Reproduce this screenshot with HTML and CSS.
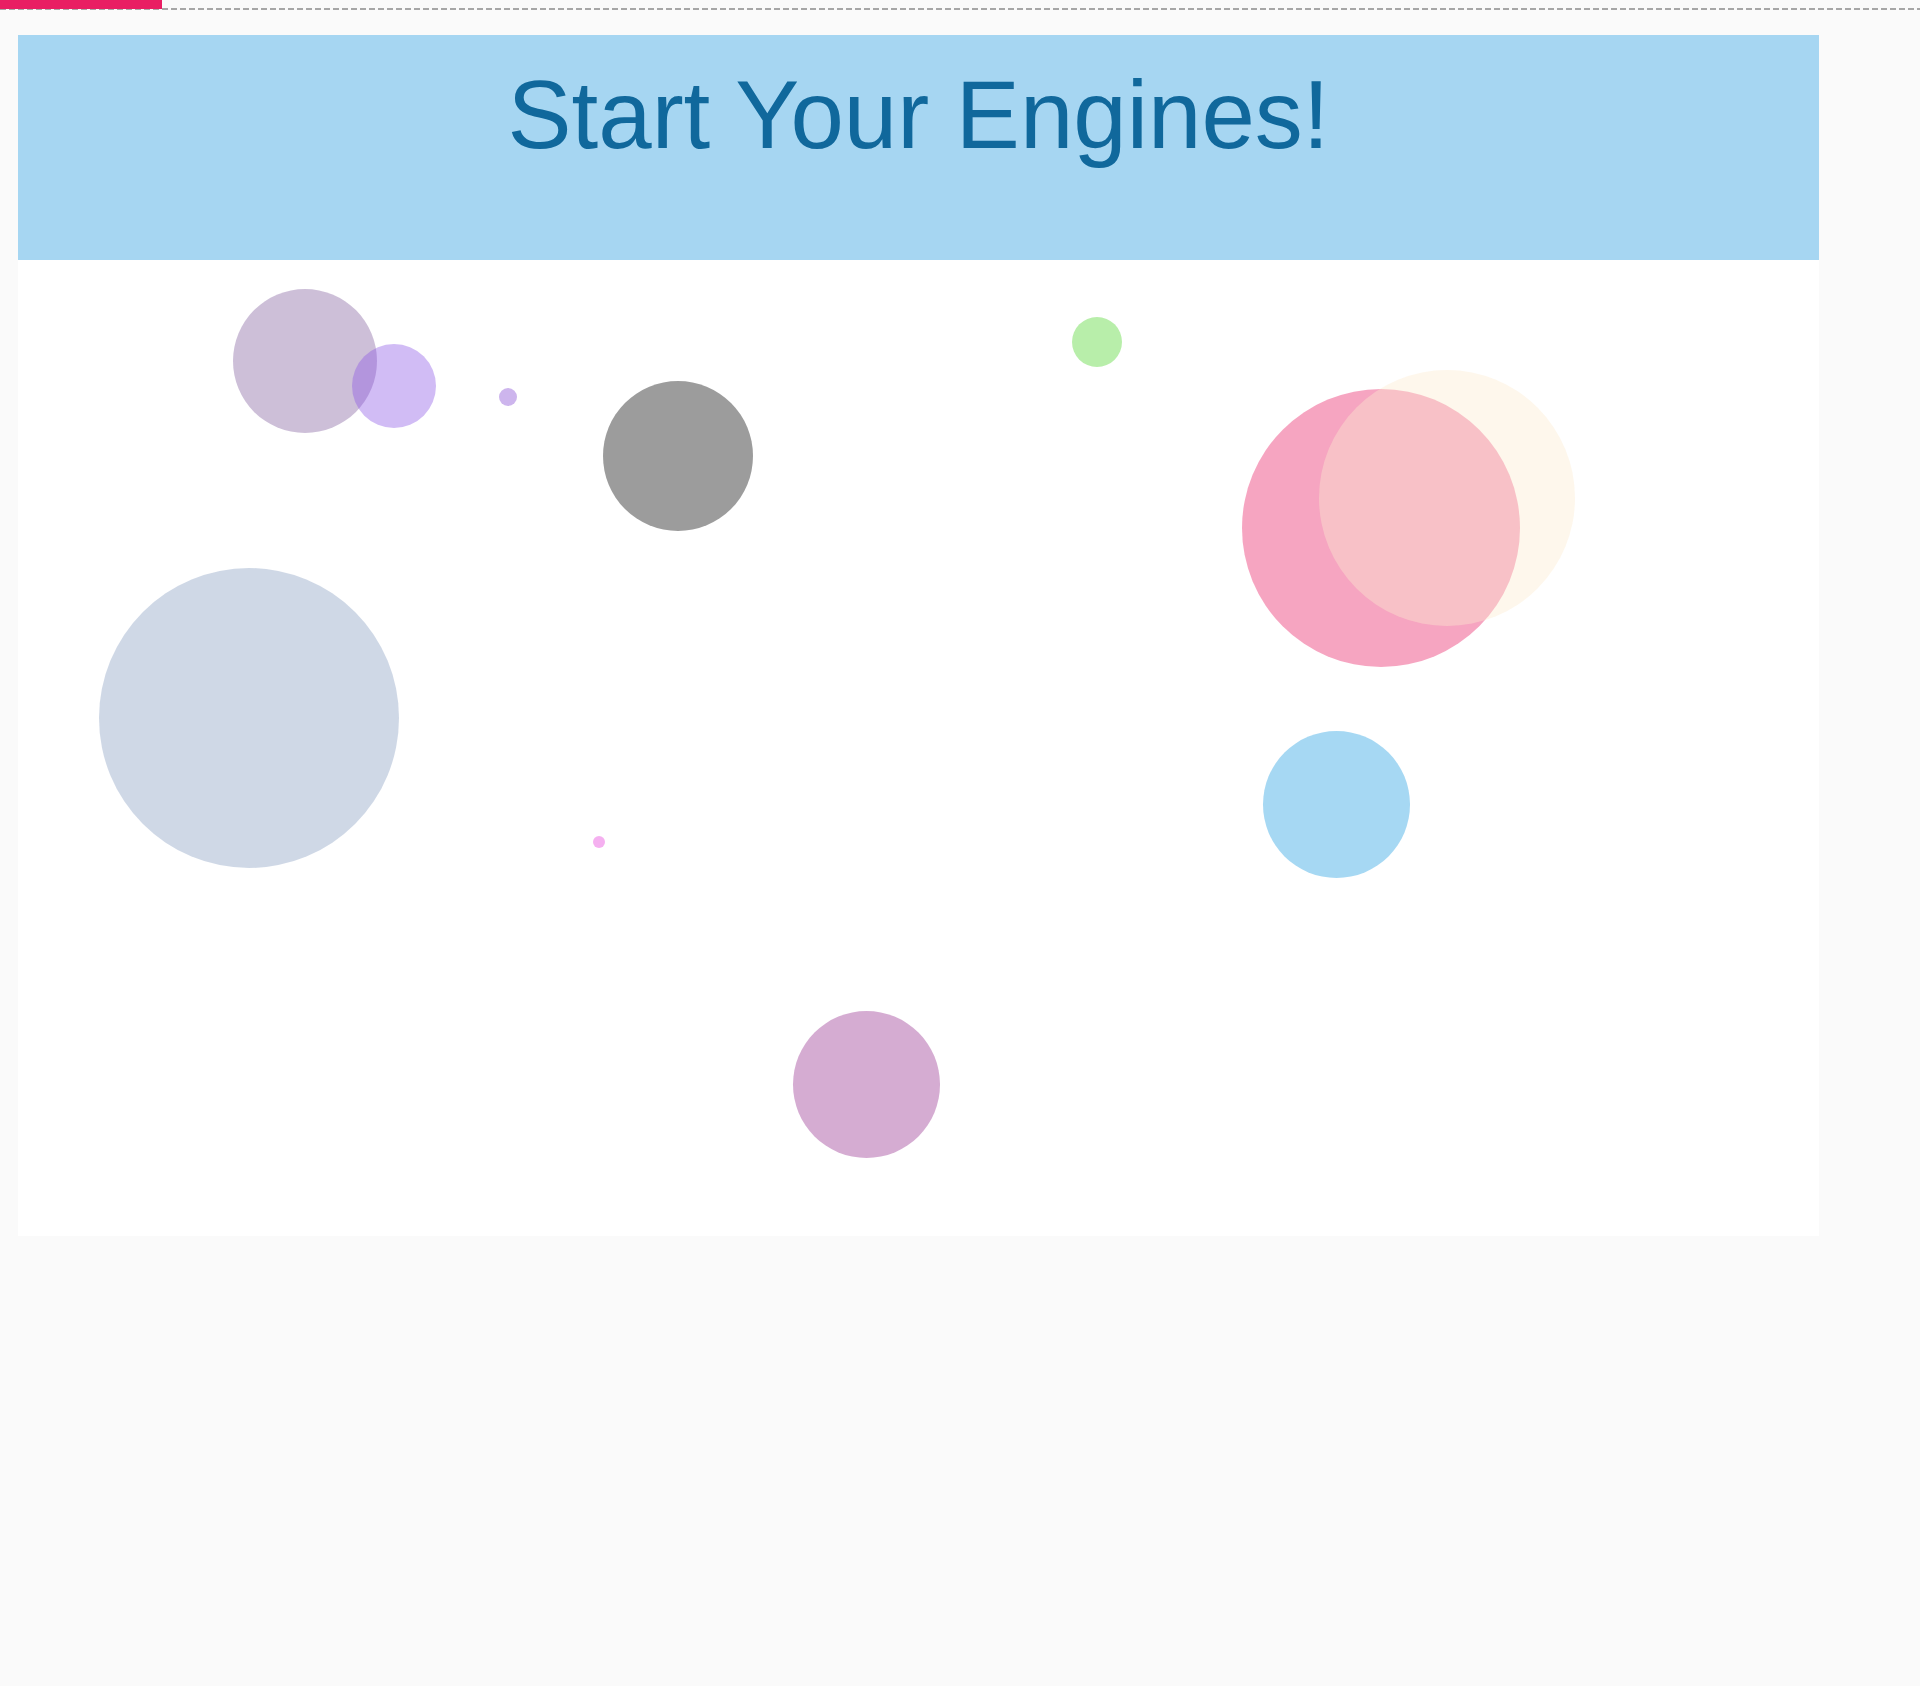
FILE: index.html
```html
<!DOCTYPE html>
<html>
<head>
    <meta charset="utf-8" />
    <title>Start Your Engines!</title>
    <link rel="stylesheet" href="styles.css">
</head>
<body>
<!-- Loader track along the top -->
<div class="loader">
    <div class="loader-fill"></div>
</div>

<div class="race">
    <div class="race-header">
        <h1 class="race-title">Start Your Engines!</h1>
    </div>

    <!-- Bubbles: free canvas, positions are the content -->
    <div class="track">
        <div class="bubble" style="left:215px;top:29px;width:144px;height:144px;background:rgba(130,95,158,.4)"></div>
        <div class="bubble" style="left:334px;top:84px;width:84px;height:84px;background:rgba(140,88,230,.4)"></div>
        <div class="bubble" style="left:481px;top:128px;width:18px;height:18px;background:rgba(130,70,210,.4)"></div>
        <div class="bubble" style="left:585px;top:121px;width:150px;height:150px;background:rgba(0,0,0,.39)"></div>
        <div class="bubble" style="left:1054px;top:57px;width:50px;height:50px;background:rgba(78,213,43,.4)"></div>
        <div class="bubble" style="left:1224px;top:129px;width:278px;height:278px;background:rgba(233,30,99,.4)"></div>
        <div class="bubble" style="left:1301px;top:110px;width:256px;height:256px;background:rgba(253,235,208,.4)"></div>
        <div class="bubble" style="left:81px;top:308px;width:300px;height:300px;background:rgba(135,158,193,.4)"></div>
        <div class="bubble" style="left:575px;top:576px;width:12px;height:12px;background:rgba(230,58,218,.4)"></div>
        <div class="bubble" style="left:1245px;top:471px;width:147px;height:147px;background:rgba(33,158,225,.4)"></div>
        <div class="bubble" style="left:775px;top:751px;width:147px;height:147px;background:rgba(150,48,143,.4)"></div>
    </div>
</div>
</body>
</html>
```

FILE: styles.css
```css
* {
  box-sizing: border-box;
}
body {
  margin: 0;
  padding: 0;
  font-family: "Liberation Sans", Arial, sans-serif;
  background-color: #fafafa;
}

/* ============ top loader ============ */
.loader {
  position: relative;
  height: 10px;
}
.loader:after {
  content: "";
  position: absolute;
  left: 0;
  right: 0;
  top: 8px;
  height: 2px;
  background: repeating-linear-gradient(to right, #a6a6a6 0 6px, transparent 6px 9px);
}
.loader-fill {
  position: absolute;
  top: 0;
  left: 0;
  width: 162px;
  height: 9px;
  background-color: #e91e63;
  z-index: 1;
}

/* ============ race area ============ */
.race {
  width: 1801px;
  margin: 25px 0 0 18px;
  background-color: #fff;
}
.race-header {
  height: 225px;
  padding-top: 32px;
  background-color: #a6d6f2;
  text-align: center;
}
.race-title {
  margin: 0;
  font-size: 96px;
  line-height: 96px;
  font-weight: normal;
  color: #10689c;
}
.track {
  position: relative;
  height: 976px;
  overflow: hidden;
}
.bubble {
  position: absolute;
  border-radius: 50%;
}
```
